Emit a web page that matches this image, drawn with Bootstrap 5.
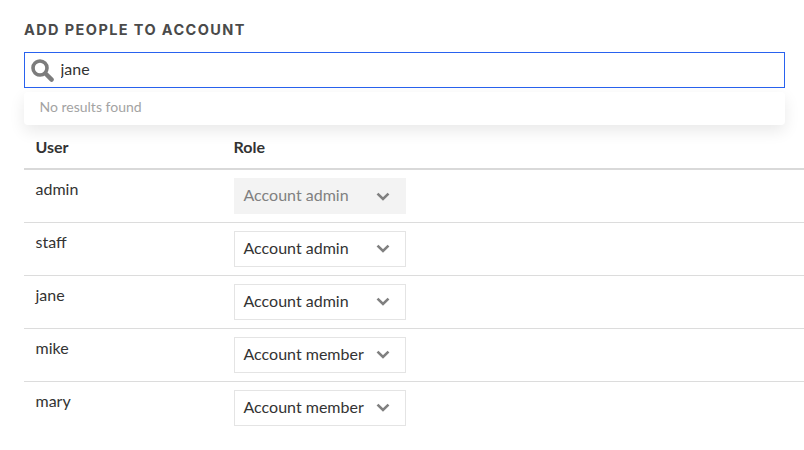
<!DOCTYPE html>
<html lang="en"><head><meta charset="utf-8"><title>Add people</title>
<link href="https://cdn.jsdelivr.net/npm/bootstrap@5.3.0/dist/css/bootstrap.min.css" rel="stylesheet">
<style>
html,body{background:#fff;overflow:hidden}
body{font-family:Lato,"Liberation Sans",sans-serif;color:#333;font-size:16px}
.page-wrap{padding:22px 0 0 24px}
.sect-title{font-family:Inter,"Open Sans",sans-serif;font-weight:700;font-size:14.5px;letter-spacing:1.4px;line-height:16px;color:#4a4a4a;margin:0 0 14px;text-transform:uppercase}
.search-wrap{width:761px;height:36px;position:relative}
.search-box{height:36px;border:1px solid #2962ef;padding:0 5px 2px;background:#fff}
.search-box svg{width:24px;height:24px;flex:none;margin-top:2px}
.search-box input{border:0;outline:0;padding:0;margin-left:6.5px;font:16px/20px Lato,sans-serif;color:#333;flex:1;min-width:0;background:transparent}
.result-pop{position:absolute;top:40px;left:0;right:0;height:33px;background:#fff;border-radius:4px;box-shadow:0 6px 16px rgba(0,0,0,.09);padding:0 15.5px;font-size:14px;line-height:30px;color:#a3a3a3;z-index:3}
.people-tbl{width:780px;margin-top:37px;border-collapse:collapse}
.people-tbl th{font-weight:700;font-size:16px;height:44px;padding:0 11.5px;border-bottom:2px solid #d9d9d9;color:#333;vertical-align:middle;line-height:20px}
.people-tbl td{height:53px;padding:9px 11.5px 0;vertical-align:top;border-bottom:1px solid #dcdcdc;line-height:20px}
.people-tbl tr:last-child td{border-bottom:0}
.people-tbl .user-col{width:198px}
.people-tbl td.role-col{padding:8px 0 0 12px}
.role-pick{width:172px;height:36px;border:1px solid #e4e4e4;padding:0 15px 2px 8.5px;color:#333}
.role-pick.locked{background:#f3f3f3;border-color:#f3f3f3;color:#808080}
.role-pick svg{width:14px;height:9px;flex:none;margin-top:2px}
</style></head>
<body>
<div class="page-wrap">
  <h2 class="sect-title">Add people to account</h2>
  <div class="search-wrap">
    <div class="search-box d-flex align-items-center">
      <svg viewBox="0 0 24 24" aria-hidden="true"><circle cx="10" cy="10" r="7" fill="none" stroke="#7c7c7c" stroke-width="3.6"/><path d="M15.5 15.5 21.6 21.6" stroke="#7c7c7c" stroke-width="4.4" stroke-linecap="round"/></svg>
      <input type="text" value="jane" aria-label="Search">
    </div>
    <div class="result-pop">No results found</div>
  </div>
  <table class="people-tbl">
    <thead><tr><th class="user-col">User</th><th class="role-col">Role</th></tr></thead>
    <tbody>
      <tr><td>admin</td><td class="role-col"><div class="role-pick locked d-flex align-items-center justify-content-between"><span>Account admin</span><svg viewBox="0 0 14 9"><path d="M1.5 1.6 7 7 12.5 1.6" fill="none" stroke="#808080" stroke-width="2.6"/></svg></div></td></tr>
      <tr><td>staff</td><td class="role-col"><div class="role-pick d-flex align-items-center justify-content-between"><span>Account admin</span><svg viewBox="0 0 14 9"><path d="M1.5 1.6 7 7 12.5 1.6" fill="none" stroke="#808080" stroke-width="2.6"/></svg></div></td></tr>
      <tr><td>jane</td><td class="role-col"><div class="role-pick d-flex align-items-center justify-content-between"><span>Account admin</span><svg viewBox="0 0 14 9"><path d="M1.5 1.6 7 7 12.5 1.6" fill="none" stroke="#808080" stroke-width="2.6"/></svg></div></td></tr>
      <tr><td>mike</td><td class="role-col"><div class="role-pick d-flex align-items-center justify-content-between"><span>Account member</span><svg viewBox="0 0 14 9"><path d="M1.5 1.6 7 7 12.5 1.6" fill="none" stroke="#808080" stroke-width="2.6"/></svg></div></td></tr>
      <tr><td>mary</td><td class="role-col"><div class="role-pick d-flex align-items-center justify-content-between"><span>Account member</span><svg viewBox="0 0 14 9"><path d="M1.5 1.6 7 7 12.5 1.6" fill="none" stroke="#808080" stroke-width="2.6"/></svg></div></td></tr>
    </tbody>
  </table>
</div>
<script src="https://cdn.jsdelivr.net/npm/bootstrap@5.3.0/dist/js/bootstrap.bundle.min.js"></script>
</body></html>
